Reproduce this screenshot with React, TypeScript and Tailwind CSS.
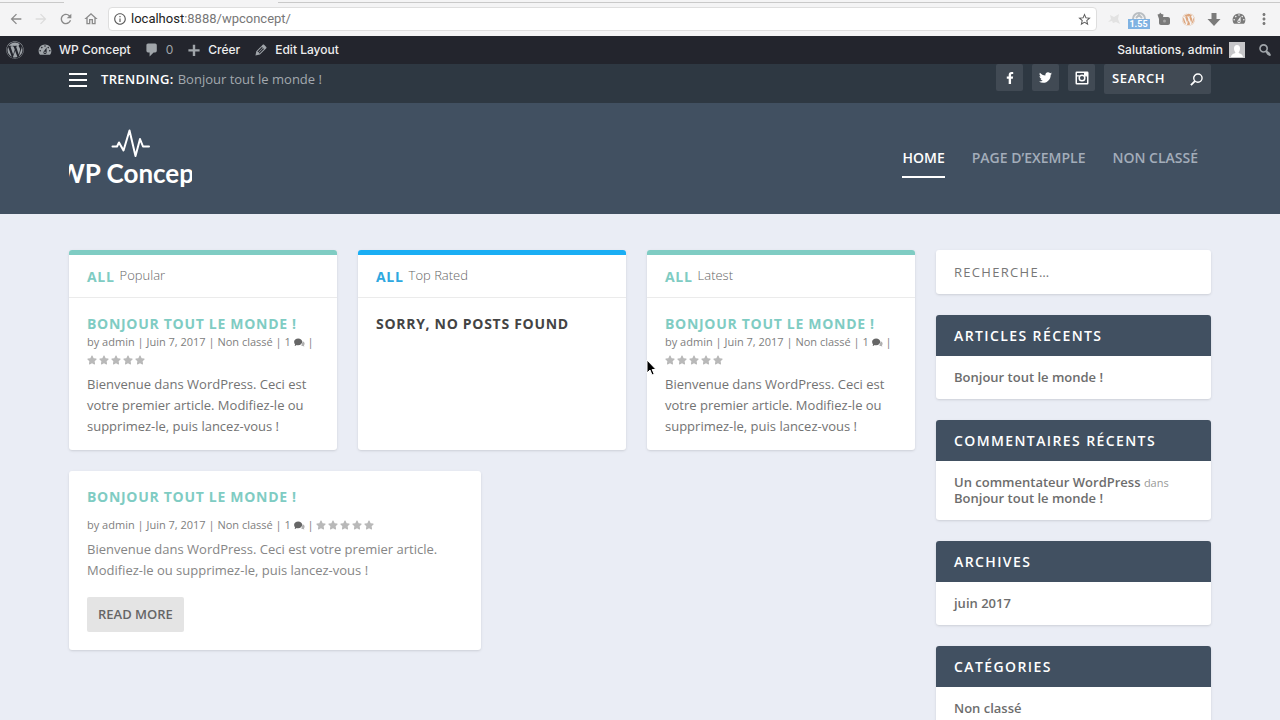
import React from 'react';
import { FaFacebookF, FaTwitter, FaStar, FaWordpress } from 'react-icons/fa';
import { MdArrowBack, MdArrowForward, MdRefresh, MdInfoOutline, MdStarBorder, MdMoreVert, MdOutlineHome } from 'react-icons/md';

const DASHBOARD =
  'M3.76 16h12.48c1.1-1.37 1.76-3.11 1.76-5 0-4.42-3.58-8-8-8s-8 3.58-8 8c0 1.89.66 3.63 1.76 5zM10 4c.55 0 1 .45 1 1s-.45 1-1 1-1-.45-1-1 .45-1 1-1zM6 6c.55 0 1 .45 1 1s-.45 1-1 1-1-.45-1-1 .45-1 1-1zm8 0c.55 0 1 .45 1 1s-.45 1-1 1-1-.45-1-1 .45-1 1-1zm-5.37 5.55L12 7v6c0 1.1-.9 2-2 2s-2-.9-2-2c0-.57.24-1.08.63-1.45zM4 10c.55 0 1 .45 1 1s-.45 1-1 1-1-.45-1-1 .45-1 1-1zm12 0c.55 0 1 .45 1 1s-.45 1-1 1-1-.45-1-1 .45-1 1-1zm-5 3c0-.55-.45-1-1-1s-1 .45-1 1 .45 1 1 1 1-.45 1-1z';
const COMMENT = 'M5 2h9c1.1 0 2 .9 2 2v7c0 1.1-.9 2-2 2h-2l-5 5v-5H5c-1.1 0-2-.9-2-2V4c0-1.1.9-2 2-2z';
const PLUS = 'M17 9v3h-5.5v5.5h-3V12H3V9h5.5V3.500h3V9H17z';
const PENCIL =
  'M13.89 3.39l2.71 2.72c.46.46.42 1.24.03 1.64l-8.01 8.02-5.56 1.16 1.16-5.58s7.6-7.63 7.99-8.03c.39-.39 1.22-.39 1.68.07zm-2.73 2.79l-5.59 5.61 1.11 1.11 5.54-5.65zm-2.97 8.23l5.58-5.6-1.07-1.08-5.59 5.6z';
const SEARCH =
  'M12.14 4.18c1.87 1.87 2.11 4.75.72 6.89.12.1.22.21.36.31.2.16.47.36.81.59.34.24.56.39.66.47.42.31.73.57.94.78.32.32.6.65.84 1 .25.35.44.69.59 1.04.14.35.21.68.18 1-.02.32-.14.59-.36.81s-.49.34-.81.36c-.31.02-.65-.04-.99-.19-.35-.14-.7-.34-1.04-.59-.35-.24-.68-.52-1-.84-.21-.21-.47-.52-.77-.93-.1-.13-.25-.35-.47-.66-.22-.32-.4-.57-.56-.78-.16-.2-.29-.35-.44-.5-2.07 1.09-4.69.76-6.44-.98-2.14-2.15-2.14-5.64 0-7.78 2.15-2.15 5.63-2.15 7.78 0zm-1.41 6.36c1.36-1.37 1.36-3.58 0-4.95-1.37-1.37-3.59-1.37-4.95 0-1.37 1.37-1.37 3.58 0 4.95 1.36 1.37 3.58 1.37 4.95 0z';

interface DashiconProps {
  path: string;
  className?: string;
}

const Dashicon: React.FC<DashiconProps> = ({ path, className = '' }) => (
  <svg viewBox="0 0 20 20" className={`size-4 shrink-0 fill-current ${className}`} aria-hidden="true">
    <path d={path} />
  </svg>
);

const BrowserBar = () => (
  <div className="flex h-9 shrink-0 flex-col bg-[#f4f4f5] font-[Roboto,sans-serif]">
    <div className="flex h-[3px] justify-between">
      <div className="w-16 border-b border-[#c9c9c9]"></div>
      <div className="ml-[214px] flex-1 border-b border-[#c9c9c9]"></div>
    </div>
    <div className="flex h-8 items-center pr-1 pl-2">
      <div className="flex items-center gap-[9px] pr-[9px] text-[#8b8b8b]">
        <button aria-label="Back"><MdArrowBack className="size-4" /></button>
        <button aria-label="Forward" className="text-[#dcdcdc]"><MdArrowForward className="size-4" /></button>
        <button aria-label="Reload"><MdRefresh className="size-4" /></button>
        <button aria-label="Home"><MdOutlineHome className="size-4" /></button>
      </div>
      <div className="flex h-6 flex-1 items-center rounded-sm border border-[#dedede] bg-white px-1">
        <MdInfoOutline className="size-[14px] text-[#5c5c5c]" />
        <p className="ml-1 flex-1 text-[13px] text-[#777]">
          <span className="text-[#222]">localhost</span>:8888/wpconcept/
        </p>
        <button aria-label="Bookmark"><MdStarBorder className="size-[15px] text-[#5c5c5c]" /></button>
      </div>
      <div className="ml-1 grid auto-cols-[25px] grid-flow-col place-items-center text-[#7a7a7a]">
        <svg viewBox="0 0 16 16" className="size-4 fill-[#e2e2e2]" aria-hidden="true">
          <path d="M2 11l3-3-1-4 4 2 5-3-1 5 2 5-4-2-3 1-1-2z" />
        </svg>
        <div className="relative h-5 w-[22px]">
          <svg viewBox="0 0 22 20" className="size-full fill-none stroke-[#b9bec2]" strokeWidth="2" aria-hidden="true">
            <path d="M5 10a6 6 0 0 1 12 0M8 9l3-3 3 3" />
          </svg>
          <span className="absolute inset-x-0 bottom-0 bg-[#7fb2e2] text-center text-[9px] leading-[10px] font-bold text-white">1.55</span>
        </div>
        <svg viewBox="0 0 16 16" className="size-4 fill-current" aria-hidden="true">
          <path d="M1.500 3.500l2-.5.5-1.500 1.500 1.500 2 .5-.5 2.500h5c1 0 2 .8 2 2v4c0 1.200-1 2-2 2H5c-1.200 0-2-.8-2-2V8z" />
          <circle cx="8.500" cy="10" r="1.500" className="fill-[#a5a5a5]" />
        </svg>
        <FaWordpress className="size-[13px] text-[#dda57c]" />
        <svg viewBox="0 0 16 16" className="size-4 fill-current" aria-hidden="true">
          <path d="M5.500 2h5v6h4L8 15 1.500 8h4z" />
        </svg>
        <Dashicon path={DASHBOARD} />
        <button aria-label="Menu"><MdMoreVert className="size-[18px]" /></button>
      </div>
    </div>
  </div>
);

const AdminBar = () => (
  <div className="flex h-7 shrink-0 items-center justify-between bg-[#23252d] pr-[7px] pl-[6px] font-[Inter,sans-serif] text-[12px] font-medium text-[#eee]">
    <div className="flex items-center gap-[13px]">
      <a href="#" aria-label="WordPress"><FaWordpress className="size-[18px] text-[#a0a5aa]" /></a>
      <a href="#" className="flex items-center gap-[6px]"><Dashicon path={DASHBOARD} className="text-[#a0a5aa]" />WP Concept</a>
      <a href="#" className="flex items-center gap-[6px] font-normal text-[#a0a5aa]"><Dashicon path={COMMENT} />0</a>
      <a href="#" className="flex items-center gap-[6px]"><Dashicon path={PLUS} className="text-[#a0a5aa]" />Créer</a>
      <a href="#" className="flex items-center gap-[6px]"><Dashicon path={PENCIL} className="text-[#a0a5aa]" />Edit Layout</a>
    </div>
    <div className="flex items-center gap-3">
      <a href="#" className="flex items-center gap-[6px]">
        Salutations, admin
        <svg viewBox="0 0 16 16" className="size-4" aria-hidden="true">
          <rect width="16" height="16" fill="#c6c6c9" />
          <path d="M8 3c2 0 3 1.500 3 3.500S10 10 9.500 10.500c0 1 4 1 4.500 4.500H2c.5-3.500 4.500-3.500 4.500-4.500C6 10 5 8.500 5 6.500S6 3 8 3z" fill="#fff" />
        </svg>
      </a>
      <button aria-label="Rechercher"><Dashicon path={SEARCH} className="text-[#a0a5aa]" /></button>
    </div>
  </div>
);

const TopHeader = () => (
  <div className="bg-[#2e3842] pb-[7px]">
    <div className="mx-auto flex h-8 max-w-[1142px] justify-between">
      <div className="flex items-center text-[13px]">
        <button aria-label="Menu" className="flex w-[18px] flex-col gap-1">
          <span className="h-[2px] w-full bg-white"></span>
          <span className="h-[2px] w-full bg-white"></span>
          <span className="h-[2px] w-full bg-white"></span>
        </button>
        <span className="ml-[14px] font-semibold tracking-wide text-white">TRENDING:</span>
        <a href="#" className="ml-1 text-[#a3a9af]">Bonjour tout le monde !</a>
      </div>
      <div className="flex items-start gap-[9px] text-white">
        <a href="#" aria-label="Facebook" className="flex size-[27px] items-center justify-center rounded-xs bg-[#414a54]"><FaFacebookF className="size-3" /></a>
        <a href="#" aria-label="Twitter" className="flex size-[27px] items-center justify-center rounded-xs bg-[#414a54]"><FaTwitter className="size-[13px]" /></a>
        <a href="#" aria-label="Instagram" className="flex size-[27px] items-center justify-center rounded-xs bg-[#414a54]">
          <svg viewBox="0 0 14 14" className="size-[14px] fill-none stroke-current" aria-hidden="true">
            <rect x="1.250" y="1.250" width="11.500" height="11.500" rx="0.500" strokeWidth="1.500" />
            <path d="M1 4.800h3.500M9.500 4.800H13" strokeWidth="1.200" />
            <path d="M9 2h3v2.800H9z" fill="currentColor" stroke="none" />
            <circle cx="7" cy="7" r="2.800" strokeWidth="1.500" />
          </svg>
        </a>
        <form className="flex h-[30px] w-[107px] items-center rounded-xs bg-[#414a54] px-2">
          <input type="text" aria-label="Search" placeholder="SEARCH" className="w-0 flex-1 text-[13px] font-semibold tracking-wider outline-none placeholder:text-white" />
          <button aria-label="Submit search">
            <svg viewBox="0 0 14 14" className="size-[13px] fill-none stroke-current" strokeWidth="1.500" aria-hidden="true">
              <circle cx="8.500" cy="5.500" r="4.500" />
              <path d="M5.300 8.700L1 13" strokeWidth="2" />
            </svg>
          </button>
        </form>
      </div>
    </div>
  </div>
);

const MainHeader = () => (
  <header className="bg-[#415061]">
    <div className="mx-auto flex h-[111px] max-w-[1142px] items-center justify-between">
      <a href="#" className="flex w-[123px] flex-col items-center overflow-hidden text-white">
        <svg viewBox="0 0 40 28" className="h-7 w-10 fill-none stroke-current" strokeWidth="2" strokeLinecap="round" strokeLinejoin="round" aria-hidden="true">
          <path d="M1.500 17.500H6l2-4 4.500 8L18.500 1.500 24.500 27 29 10l3 7.500h6" />
        </svg>
        <span className="font-[Lato,sans-serif] text-[26px] leading-8 font-bold whitespace-nowrap">WP Concept</span>
      </a>
      <nav className="flex gap-[27px] pr-[13px] text-[14px] leading-5 font-semibold text-[#a3adba]">
        <a href="#" className="border-b-2 border-white pt-2 pb-2 text-white">HOME</a>
        <a href="#" className="pt-2 pb-2">PAGE D’EXEMPLE</a>
        <a href="#" className="pt-2 pb-2">NON CLASSÉ</a>
      </nav>
    </div>
  </header>
);

const Stars = () => (
  <span className="inline-flex gap-[2px] align-[-1px] text-[#b9b9b9]">
    {[1, 2, 3, 4, 5].map((n) => (
      <FaStar key={n} className="size-[10px]" />
    ))}
  </span>
);

const PostMeta = () => (
  <p className="text-[11px] leading-[18px] text-[#808080]">
    by <a href="#">admin</a> | Juin 7, 2017 | <a href="#">Non classé</a> | 1{' '}
    <svg viewBox="0 0 12 10" className="inline h-[9px] w-[11px] align-[-1px]" aria-hidden="true">
      <path d="M8 8.500c2 .2 3.500 1 3.500 1S11 8.500 11 8c1-1 1.200-3.500-1.500-4.500z" fill="#b0b0b0" />
      <path d="M4.500.5C7 .5 9 2 9 4.200S7 8 4.500 8c-.6 0-1.200 0-1.700-.2C2 8.500 1 9 .5 9c.4-.5.6-1.200.5-2C.4 6.300 0 5.300 0 4.200 0 2 2 .5 4.500.5z" fill="#666" />
    </svg>{' '}
    | <Stars />
  </p>
);

interface TabbedCardProps {
  label: string;
  accent: string;
  children: React.ReactNode;
}

const TabbedCard: React.FC<TabbedCardProps> = ({ label, accent, children }) => (
  <section className="flex-1 overflow-hidden rounded-[3px] bg-white shadow-sm">
    <h2 className={`flex h-12 items-center gap-[5px] border-t-5 border-b border-b-[#ebebeb] px-[18px] text-[13px] ${accent}`}>
      <span className="text-[14px] font-bold tracking-wider">ALL</span>
      <span className="font-light text-[#666]">{label}</span>
    </h2>
    <div className="px-[18px] pt-[17px] pb-[13px]">{children}</div>
  </section>
);

const PostTitle = () => (
  <h3 className="text-[14px] leading-[18px] font-bold tracking-wider text-[#7fccc3]">
    <a href="#">BONJOUR TOUT LE MONDE !</a>
  </h3>
);

const PostSummary = () => (
  <>
    <PostTitle />
    <PostMeta />
    <p className="mt-[5px] text-[13px] leading-[21px] text-[#737373]">
      Bienvenue dans WordPress. Ceci est votre premier article. Modifiez-le ou supprimez-le, puis lancez-vous !
    </p>
  </>
);

const Widget: React.FC<{ title: string; children: React.ReactNode }> = ({ title, children }) => (
  <section className="overflow-hidden rounded-[3px] bg-white shadow-sm">
    <h4 className="bg-[#415061] px-[18px] py-[10px] text-[14px] leading-[21px] font-semibold tracking-widest text-white">{title}</h4>
    <div className="px-[18px] pt-[13px] pb-[14px] text-[13px] leading-4 font-semibold text-[#6d6d6d]">{children}</div>
  </section>
);

const Sidebar = () => (
  <aside className="flex w-[275px] shrink-0 flex-col gap-[21px]">
    <input
      type="search"
      aria-label="Recherche"
      placeholder="RECHERCHE…"
      className="h-11 rounded-[3px] bg-white px-[18px] text-[13px] tracking-widest shadow-sm outline-none placeholder:text-[#777]"
    />
    <Widget title="ARTICLES RÉCENTS"><a href="#">Bonjour tout le monde !</a></Widget>
    <Widget title="COMMENTAIRES RÉCENTS">
      <a href="#">Un commentateur WordPress</a> <span className="text-[11px] leading-none font-normal text-[#999]">dans</span>
      <br />
      <a href="#">Bonjour tout le monde !</a>
    </Widget>
    <Widget title="ARCHIVES"><a href="#">juin 2017</a></Widget>
    <Widget title="CATÉGORIES"><a href="#">Non classé</a></Widget>
  </aside>
);

const App: React.FC = () => {
  return (
    <div className="relative flex h-screen flex-col overflow-hidden bg-[#eaedf5] font-['Open_Sans',sans-serif]">
      <BrowserBar />
      <AdminBar />
      <div className="min-h-0 flex-1 overflow-hidden">
        <TopHeader />
        <MainHeader />
        <div className="mx-auto flex max-w-[1142px] items-start gap-[21px] pt-9">
          <main className="flex flex-1 flex-col gap-[21px]">
            <div className="flex gap-[21px]">
              <TabbedCard label="Popular" accent="border-t-[#7fccc3] text-[#7fccc3]"><PostSummary /></TabbedCard>
              <TabbedCard label="Top Rated" accent="border-t-[#1aaef4] text-[#2ea8e0]">
                <h3 className="text-[14px] leading-[18px] font-bold tracking-wider text-[#444]">SORRY, NO POSTS FOUND</h3>
              </TabbedCard>
              <TabbedCard label="Latest" accent="border-t-[#7fccc3] text-[#7fccc3]"><PostSummary /></TabbedCard>
            </div>
            <article className="w-[412px] rounded-[3px] bg-white px-[18px] pt-[17px] pb-[18px] shadow-sm">
              <PostTitle />
              <div className="mt-[10px]">
                <PostMeta />
              </div>
              <p className="mt-[5px] text-[13px] leading-[21px] text-[#868686]">
                Bienvenue dans WordPress. Ceci est votre premier article. Modifiez-le ou supprimez-le, puis lancez-vous !
              </p>
              <a href="#" className="mt-4 inline-block rounded-xs bg-[#e4e4e4] px-[11px] text-[13px] leading-[35px] font-semibold text-[#666]">READ MORE</a>
            </article>
          </main>
          <Sidebar />
        </div>
      </div>
      {/* mouse pointer */}
      <svg viewBox="0 0 12 18" className="absolute top-[359px] left-[646px] h-[18px] w-3" aria-hidden="true">
        <path d="M1 1v13l3-3 2 5 2.200-1-2-4.500H10z" fill="#000" stroke="#fff" strokeWidth="1" />
      </svg>
    </div>
  );
};

export default App;
